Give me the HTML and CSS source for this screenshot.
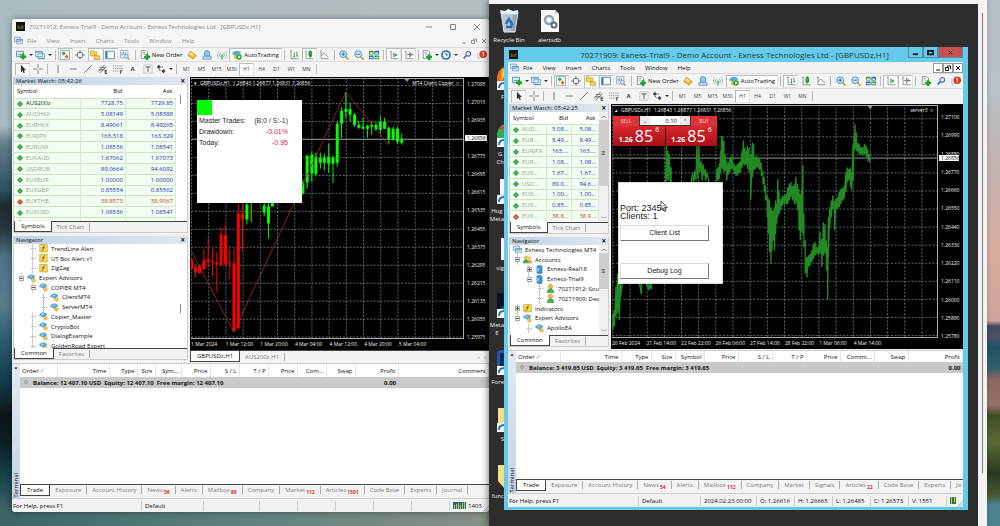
FILE: index.html
```html
<!DOCTYPE html>
<html lang="en">
<head>
  <meta charset="UTF-8">
  <meta name="viewport" content="width=device-width, initial-scale=1.0">
  <title>MetaTrader Terminals</title>
  <link rel="stylesheet" href="styles.css">
</head>
<body>
  <!-- Icon sprite -->
  <svg class="sprite" aria-hidden="true">
    <symbol id="i-logo" viewBox="0 0 12 12"><path fill="#111" d="M0 0h12v12H0z"/><path fill="none" stroke="#b5a642" d="M2 5.500h3M7 5.500h3M2 8h8"/></symbol>
    <symbol id="i-win" viewBox="0 0 12 12"><path fill="#dcecf8" stroke="#6a9cc8" d="M.5 1.500h8v6h-8zM3.500 4.500h8v6h-8z"/><path stroke="#6a9cc8" stroke-width="2" d="M3.500 5h8"/></symbol>
    <symbol id="i-newchart" viewBox="0 0 12 12"><path fill="#d9ecf7" stroke="#4c87ad" d="M.5 1.500h8.500v6.500H.5z"/><path stroke="#4c87ad" d="M2 5.500h5"/><path stroke="#19a32b" stroke-width="3" d="M8.500 4.500v7M5 8h7"/></symbol>
    <symbol id="i-profiles" viewBox="0 0 12 12"><path fill="#e5f0f8" stroke="#6d9cc0" d="M3.500 4.500h8v6h-8zM.5 1.500h8.500v6.500H.5z"/><path stroke="#4b87b5" d="M.5 2.500h8M4 10h7"/></symbol>
    <symbol id="i-market" viewBox="0 0 12 12"><path fill="#fffbe8" stroke="#6b9ed1" d="M.5.5h11v11H.5z"/><path fill="#35a547" d="M4.500 1.500l2.500 2.500-2.500 2.500L2 4z"/><path fill="#e26b20" d="M8 5.500L10.500 8 8 10.500 5.500 8z"/></symbol>
    <symbol id="i-target" viewBox="0 0 12 12"><circle cx="6" cy="6" r="3.500" fill="none" stroke="#666"/><path stroke="#666" d="M6 0v4M6 8v4M0 6h4M8 6h4"/></symbol>
    <symbol id="i-folder" viewBox="0 0 12 12"><path fill="#f6d34a" stroke="#c2952a" stroke-width=".8" d="M.5 1h3l1 1h3.500v5H.5zM5 6h2.500l1 1h3v4.500H5z"/><path fill="#f9e27e" d="M7 3l1 2 2 .3-1.500 1.400z"/></symbol>
    <symbol id="i-term" viewBox="0 0 12 12"><path fill="#fff" stroke="#3b78b5" d="M.5 1.500h11v9H.5z"/><path fill="#3b78b5" d="M1 2h2v8H1z"/></symbol>
    <symbol id="i-tester" viewBox="0 0 12 12"><path fill="#edf4fa" stroke="#8fafc8" d="M.5.5h9v9h-9z"/><path stroke="#5d86ac" d="M2.500 3v4M4.500 2v4M6.500 3v3"/><circle cx="7.500" cy="7.500" r="2.200" fill="#dff0ff" stroke="#6f94b4"/><path stroke="#cf9b3a" stroke-width="1.500" d="M9 9l2.500 2.500"/></symbol>
    <symbol id="i-order" viewBox="0 0 12 12"><path fill="#fff" stroke="#888" d="M1.500.5h5.500l2 2v7.500H1.500z"/><path stroke="#888" stroke-width=".8" d="M3 3h3M3 5h4"/><path stroke="#19a32b" stroke-width="3" d="M8.500 5v7M5 8.500h7"/></symbol>
    <symbol id="i-gold" viewBox="0 0 12 12"><path fill="#f0b92f" stroke="#b47e13" stroke-width=".7" d="M4 1.500l7 5-3.500 4.500L.8 6.500z"/><path fill="#fbe08a" d="M4 2.500l4.500 3.200-2 1.500L2 4.700z"/></symbol>
    <symbol id="i-dome" viewBox="0 0 12 12"><path fill="#8ec6ef" stroke="#3e84bb" stroke-width=".8" d="M3 7V3.500a3 3 0 016 0V7z"/><path fill="#c7e0f3" stroke="#3e84bb" stroke-width=".8" d="M1 8h10v3H1z"/></symbol>
    <symbol id="i-signal" viewBox="0 0 12 12"><path fill="none" stroke="#9fbcc4" d="M2.500 1.500a7 7 0 000 9M9.500 1.500a7 7 0 010 9"/><path fill="none" stroke="#5fb86a" d="M4.300 3.500a3.500 3.500 0 000 5M7.700 3.500a3.500 3.500 0 010 5"/><path stroke="#3fae4c" stroke-width="1.500" d="M6 5.500v6"/></symbol>
    <symbol id="i-auto" viewBox="0 0 12 12"><path fill="#55a9dd" d="M0 5c1-4 8-6 11-1L6 7z"/><path fill="#e6b93c" d="M2 6h6v5H3z"/><circle cx="8.500" cy="8.500" r="3.300" fill="#27a83c"/><path fill="#fff" d="M7.500 6.700l3 1.800-3 1.800z"/></symbol>
    <symbol id="i-bars" viewBox="0 0 12 12"><path fill="none" stroke="#888" d="M2.500 1v9.500h9M2.500 1L1 2.500M2.500 1L4 2.500"/><path fill="none" stroke="#2a8a3a" d="M6.500 3v6M5 8h1.500M9.500 2v6M9.500 7H11"/></symbol>
    <symbol id="i-candle" viewBox="0 0 12 12"><path fill="none" stroke="#888" d="M2.500 1v9.500h9M2.500 1L1 2.500"/><path stroke="#1d8b2e" d="M7.500 0v9.500"/><path fill="#21b53a" stroke="#1d8b2e" d="M6 2h3v5.500H6z"/></symbol>
    <symbol id="i-line" viewBox="0 0 12 12"><path fill="none" stroke="#888" d="M2.500 1v9.500h9M2.500 1L1 2.500"/><path fill="none" stroke="#5f9b68" d="M3 7c2-4 3-4 5-1l3 2"/></symbol>
    <symbol id="i-zoomin" viewBox="0 0 12 12"><path stroke="#d1a33b" stroke-width="2.200" d="M7.500 7.500l4 4"/><circle cx="5" cy="5" r="4" fill="#d6ecfb" stroke="#4a92ca" stroke-width="1.200"/><path stroke="#2f78b8" stroke-width="1.300" d="M5 2.800v4.400M2.800 5h4.400"/></symbol>
    <symbol id="i-zoomout" viewBox="0 0 12 12"><path stroke="#d1a33b" stroke-width="2.200" d="M7.500 7.500l4 4"/><circle cx="5" cy="5" r="4" fill="#d6ecfb" stroke="#4a92ca" stroke-width="1.200"/><path stroke="#2f78b8" stroke-width="1.300" d="M2.800 5h4.400"/></symbol>
    <symbol id="i-tile" viewBox="0 0 12 12"><path fill="#3f9e3f" d="M0 1h5.500v4.500H0zM6.500 6.500H12V11H6.500z"/><path fill="#2d66b8" d="M6.500 1H12v4.500H6.500zM0 6.500h5.500V11H0z"/><path fill="#fff" d="M1 3h3.500v1.500H1zM7.500 3H11v1.500H7.500zM1 8.500h3.500V10H1zM7.500 8.500H11V10H7.500z"/></symbol>
    <symbol id="i-scroll" viewBox="0 0 12 12"><path fill="none" stroke="#888" d="M2.500 1v9.500h9M2.500 1L1 2.500M5.500 3v6"/><path fill="#26a33b" d="M6.500 3.500l4 2.500-4 2.500z"/></symbol>
    <symbol id="i-shift" viewBox="0 0 12 12"><path fill="none" stroke="#888" d="M2.500 1v9.500h9M2.500 1L1 2.500"/><path fill="none" stroke="#555" d="M7 2v7M7.500 5.500h4M9 4L7.500 5.500 9 7M4 5.500h2.500"/></symbol>
    <symbol id="i-clock" viewBox="0 0 12 12"><circle cx="6" cy="6" r="4.800" fill="#eaf4fc" stroke="#2973ba" stroke-width="2"/><path fill="none" stroke="#444" d="M6 3v3h2.500"/></symbol>
    <symbol id="i-search" viewBox="0 0 12 12"><circle cx="7.500" cy="4.500" r="2.800" fill="#eef4fd" stroke="#4a6fc4" stroke-width="1.300"/><path stroke="#4a6fc4" stroke-width="2" d="M5.500 6.500L2 10"/></symbol>
    <symbol id="i-badge" viewBox="0 0 12 12"><path fill="#e3e3e3" stroke="#bbb" stroke-width=".6" d="M.5 4h7v5H4l-2 2V9H.5z"/><circle cx="7.500" cy="5" r="4.500" fill="#d83a22"/><path fill="none" stroke="#fff" stroke-width="1.100" d="M6.300 3.600l1.400-1v5"/></symbol>
    <symbol id="i-cursor" viewBox="0 0 12 12"><path fill="#333" d="M3.500 1v9l2-2 1.300 3 1.400-.6L7 7.500h2.800z"/></symbol>
    <symbol id="i-cross" viewBox="0 0 12 12"><path stroke="#777" d="M6 0v5M6 7v5M0 6h5M7 6h5"/></symbol>
    <symbol id="i-vline" viewBox="0 0 12 12"><path stroke="#666" d="M6 1v10"/></symbol>
    <symbol id="i-hline" viewBox="0 0 12 12"><path stroke="#666" d="M2 6h8.500"/></symbol>
    <symbol id="i-trend" viewBox="0 0 12 12"><path stroke="#666" d="M1.500 10.500l9-9"/></symbol>
    <symbol id="i-channel" viewBox="0 0 12 12"><path fill="none" stroke="#555" d="M0 9l8-8M2 11l8-8M2 4h6M1 7h7"/><path fill="none" stroke="#333" d="M11 7.500H8.500v4H11M8.500 9.500H11"/></symbol>
    <symbol id="i-fibo" viewBox="0 0 12 12"><path stroke="#888" stroke-dasharray="1.500 .7" d="M0 2.500h12M0 5.500h12M0 8.500h8"/><path fill="none" stroke="#555" d="M11.500 7.500H9v4.500M9 9.500h2"/></symbol>
    <symbol id="i-label" viewBox="0 0 12 12"><path fill="none" stroke="#999" stroke-dasharray="1 1" d="M1 1h10v10H1z"/><path fill="none" stroke="#444" d="M3 3.500h6M6 3.500V9.500"/></symbol>
    <symbol id="i-arrows" viewBox="0 0 12 12"><path fill="#444" d="M3.500 1L6 3.500 3.500 6 1 3.500zM9 6l2.500 2.500L9 11 6.500 8.500z"/><path stroke="#444" d="M3.500 6l2 2.500M6.500 3.500l2 0"/></symbol>
    <symbol id="i-up" viewBox="0 0 8 8"><path fill="#2f9e3c" d="M4 0l4 4-4 4-4-4z"/><path fill="#9be0a0" d="M4 3l1.200 1L4 5.200 2.800 4z"/></symbol>
    <symbol id="i-down" viewBox="0 0 8 8"><path fill="#c8422d" d="M4 0l4 4-4 4-4-4z"/><path fill="#f0a898" d="M4 3l1.200 1L4 5.200 2.800 4z"/></symbol>
    <symbol id="i-fx" viewBox="0 0 12 12"><path fill="#f6dc5e" stroke="#c9a52c" d="M1 .5h10v10H1z"/><path fill="none" stroke="#7a5e10" stroke-width="1.200" d="M8 2.500c-2-.5-2 1-2.300 3S5 9 3.500 8.700M4 5h3.500"/></symbol>
    <symbol id="i-expert" viewBox="0 0 12 12"><path fill="#4ea8dc" stroke="#2c7db3" stroke-width=".6" d="M.5 4.500C2 .5 8 0 10.500 3.500L6.500 7z"/><path fill="#8fd0f2" d="M2 4c2-2.500 4-2.500 6-1.500L4.500 5z"/><path fill="#f0cb4d" stroke="#b5891d" stroke-width=".6" d="M6 7l3-2 2.500 3.500-2 2.500L6.500 10z"/></symbol>
    <symbol id="i-users" viewBox="0 0 12 12"><circle cx="4" cy="3" r="2.500" fill="#e6b53c"/><path fill="#3aa347" d="M0 11c0-7 8-7 8 0z"/><circle cx="8.500" cy="4" r="2.300" fill="#f1c75a"/><path fill="#d9a126" d="M5.500 11c0-6 6.500-6 6.500 0z"/></symbol>
    <symbol id="i-user" viewBox="0 0 12 12"><circle cx="6" cy="3.200" r="2.900" fill="#e9b93b" stroke="#a6791a" stroke-width=".6"/><path fill="#43b04e" stroke="#287a32" stroke-width=".6" d="M1.500 11.500c0-7 9-7 9 0z"/></symbol>
    <symbol id="i-server" viewBox="0 0 12 12"><path fill="#3a95d2" stroke="#1f6ca3" stroke-width=".6" d="M2.500 1.500c2-1.500 5-1.500 7 0v9c-2 1.500-5 1.500-7 0z"/><path stroke="#c9e8fb" stroke-width="1.500" d="M4 3.500v5"/></symbol>
    <symbol id="i-conn" viewBox="0 0 13 7"><path fill="#2f6478" d="M0 0h13v7H0z"/><path stroke="#b4cf52" d="M1.500 3v4M3.500 2v5M5.500 1v6M7.500 3v4M9.500 1v6M11.500 0v7"/></symbol>
    <symbol id="i-blocks" viewBox="0 0 6 7"><path fill="#3b7040" d="M0 0h6v7H0z"/><path stroke="#c3d24e" d="M1.500 0v7M4.500 0v5"/></symbol>
    <symbol id="i-grip" viewBox="0 0 8 8"><path stroke="#aaa" d="M0 8l8-8M3 8l5-5M6 8l2-2"/></symbol>
  </svg>

  <main class="desktop">
    <!-- Local terminal -->
    <section class="window local">
      <header class="titlebar">
        <svg class="logo"><use href="#i-logo"/></svg>
        <h1>70271912: Exness-Trial9 - Demo Account - Exness Technologies Ltd - [GBPUSDz,H1]</h1>
        <div class="window-buttons">
          <button aria-label="Minimize"><svg viewBox="0 0 8 8"><path d="M1 4h6"/></svg></button>
          <button aria-label="Maximize"><svg viewBox="0 0 8 8"><path d="M1.500 1.500h5v5h-5z"/></svg></button>
          <button aria-label="Close"><svg viewBox="0 0 8 8"><path d="M1 1l6 6M7 1L1 7"/></svg></button>
        </div>
      </header>
      <nav class="menu">
        <svg class="icon"><use href="#i-win"/></svg>
        <button>File</button><button>View</button><button>Insert</button><button>Charts</button><button>Tools</button><button>Window</button><button>Help</button>
        <div class="child-buttons">
          <button aria-label="Minimize chart"><svg viewBox="0 0 8 8"><path d="M2 6h4"/></svg></button>
          <button aria-label="Restore chart"><svg viewBox="0 0 8 8"><path d="M1.500 3.500h3v3h-3zM3 2h3.500v3"/></svg></button>
          <button aria-label="Close chart"><svg viewBox="0 0 8 8"><path d="M2 2l4 4M6 2L2 6"/></svg></button>
        </div>
      </nav>
      <div class="toolbar">
        <button class="tool drop" aria-label="New chart"><svg class="icon"><use href="#i-newchart"/></svg></button>
        <button class="tool drop" aria-label="Profiles"><svg class="icon"><use href="#i-profiles"/></svg></button>
        <i class="sep"></i>
        <button class="tool on" aria-label="Market watch"><svg class="icon"><use href="#i-market"/></svg></button>
        <button class="tool" aria-label="Data window"><svg class="icon"><use href="#i-target"/></svg></button>
        <button class="tool on" aria-label="Navigator"><svg class="icon"><use href="#i-folder"/></svg></button>
        <button class="tool on" aria-label="Terminal"><svg class="icon"><use href="#i-term"/></svg></button>
        <button class="tool" aria-label="Strategy tester"><svg class="icon"><use href="#i-tester"/></svg></button>
        <i class="sep"></i>
        <button class="tool wide"><svg class="icon"><use href="#i-order"/></svg>New Order</button>
        <button class="tool" aria-label="MetaEditor"><svg class="icon"><use href="#i-gold"/></svg></button>
        <button class="tool" aria-label="Market"><svg class="icon"><use href="#i-dome"/></svg></button>
        <button class="tool" aria-label="Signals"><svg class="icon"><use href="#i-signal"/></svg></button>
        <button class="tool wide on"><svg class="icon"><use href="#i-auto"/></svg>AutoTrading</button>
        <i class="sep"></i>
        <button class="tool" aria-label="Bar chart"><svg class="icon"><use href="#i-bars"/></svg></button>
        <button class="tool on" aria-label="Candlesticks"><svg class="icon"><use href="#i-candle"/></svg></button>
        <button class="tool" aria-label="Line chart"><svg class="icon"><use href="#i-line"/></svg></button>
        <i class="sep"></i>
        <button class="tool" aria-label="Zoom in"><svg class="icon"><use href="#i-zoomin"/></svg></button>
        <button class="tool" aria-label="Zoom out"><svg class="icon"><use href="#i-zoomout"/></svg></button>
        <button class="tool" aria-label="Tile windows"><svg class="icon"><use href="#i-tile"/></svg></button>
        <i class="sep"></i>
        <button class="tool on" aria-label="Auto scroll"><svg class="icon"><use href="#i-scroll"/></svg></button>
        <button class="tool on" aria-label="Chart shift"><svg class="icon"><use href="#i-shift"/></svg></button>
        <i class="sep"></i>
        <button class="tool drop" aria-label="Indicators"><svg class="icon"><use href="#i-order"/></svg></button>
        <button class="tool drop" aria-label="Periods"><svg class="icon"><use href="#i-clock"/></svg></button>
        <button class="tool" aria-label="Search"><svg class="icon"><use href="#i-search"/></svg></button>
        <button class="tool" aria-label="Messages"><svg class="icon"><use href="#i-badge"/></svg></button>
      </div>
      <div class="toolbar periods">
        <button class="tool on" aria-label="Cursor"><svg class="icon"><use href="#i-cursor"/></svg></button>
        <button class="tool" aria-label="Crosshair"><svg class="icon"><use href="#i-cross"/></svg></button>
        <i class="sep"></i>
        <button class="tool" aria-label="Vertical line"><svg class="icon"><use href="#i-vline"/></svg></button>
        <button class="tool" aria-label="Horizontal line"><svg class="icon"><use href="#i-hline"/></svg></button>
        <button class="tool" aria-label="Trendline"><svg class="icon"><use href="#i-trend"/></svg></button>
        <button class="tool" aria-label="Channel"><svg class="icon"><use href="#i-channel"/></svg></button>
        <button class="tool" aria-label="Fibonacci"><svg class="icon"><use href="#i-fibo"/></svg></button>
        <button class="tool letter">A</button>
        <button class="tool" aria-label="Text label"><svg class="icon"><use href="#i-label"/></svg></button>
        <button class="tool drop" aria-label="Arrows"><svg class="icon"><use href="#i-arrows"/></svg></button>
        <i class="sep"></i>
        <button class="tool">M1</button><button class="tool">M5</button><button class="tool">M15</button><button class="tool">M30</button><button class="tool on">H1</button><button class="tool">H4</button><button class="tool">D1</button><button class="tool">W1</button><button class="tool">MN</button>
        <i class="sep"></i>
      </div>

      <div class="workspace">
        <aside class="side">
          <section class="panel market">
            <h2>Market Watch: 05:42:26<button aria-label="Close market watch">×</button></h2>
            <div class="panel-body">
              <table class="quotes">
                <thead><tr><th>Symbol</th><th>Bid</th><th>Ask</th></tr></thead>
                <tbody>
                  <tr class="active"><td><svg><use href="#i-up"/></svg>AUS200z</td><td>7728.75</td><td>7729.85</td></tr>
                  <tr><td><svg><use href="#i-up"/></svg>AUDHKX</td><td>5.08149</td><td>5.08388</td></tr>
                  <tr><td><svg><use href="#i-up"/></svg>EURHKX</td><td>8.49061</td><td>8.49265</td></tr>
                  <tr><td><svg><use href="#i-up"/></svg>EURJPX</td><td>163.318</td><td>163.329</td></tr>
                  <tr><td><svg><use href="#i-up"/></svg>EURUSX</td><td>1.08536</td><td>1.08541</td></tr>
                  <tr><td><svg><use href="#i-up"/></svg>EUXAUD</td><td>1.67062</td><td>1.67073</td></tr>
                  <tr><td><svg><use href="#i-up"/></svg>USDRUB</td><td>89.0664</td><td>94.6092</td></tr>
                  <tr><td><svg><use href="#i-up"/></svg>EUXEUR</td><td>1.00000</td><td>1.00000</td></tr>
                  <tr><td><svg><use href="#i-up"/></svg>EUXGBP</td><td>0.85554</td><td>0.85562</td></tr>
                  <tr class="falling"><td><svg><use href="#i-down"/></svg>EUXTHB</td><td>38.8573</td><td>38.9067</td></tr>
                  <tr><td><svg><use href="#i-up"/></svg>EUXUSD</td><td>1.08536</td><td>1.08541</td></tr>
                  <tr class="falling"><td><svg><use href="#i-down"/></svg>EUXZAR</td><td>20.67823</td><td>20.70180</td></tr>
                </tbody>
              </table>
              <div class="thin-scroll"></div>
            </div>
            <div class="tabs"><button class="selected">Symbols</button><button>Tick Chart</button></div>
          </section>
          <section class="panel navigator">
            <h2>Navigator<button aria-label="Close navigator">×</button></h2>
            <div class="panel-body">
              <ul class="tree">
                <li class="l2"><i></i><svg><use href="#i-fx"/></svg>TrendLine Alert</li>
                <li class="l2"><i></i><svg><use href="#i-fx"/></svg>UT Bot Alert v1</li>
                <li class="l2"><i></i><svg><use href="#i-fx"/></svg>ZigZag</li>
                <li class="l1"><i class="box"></i><svg><use href="#i-expert"/></svg>Expert Advisors</li>
                <li class="l2"><i class="box"></i><svg><use href="#i-expert"/></svg>COPIER MT4</li>
                <li class="l3"><i></i><svg><use href="#i-expert"/></svg>ClientMT4</li>
                <li class="l3"><i></i><svg><use href="#i-expert"/></svg>ServerMT4</li>
                <li class="l2"><i></i><svg><use href="#i-expert"/></svg>Copier_Master</li>
                <li class="l2"><i></i><svg><use href="#i-expert"/></svg>CryptoBot</li>
                <li class="l2"><i></i><svg><use href="#i-expert"/></svg>DialogExample</li>
                <li class="l2"><i></i><svg><use href="#i-expert"/></svg>GoldenRoad Expert</li>
              </ul>
              <div class="thin-scroll low"></div>
            </div>
            <div class="tabs"><button class="selected">Common</button><button>Favorites</button></div>
          </section>
        </aside>

        <section class="chart-area">
          <div class="chart">
            <div class="plot">
              <svg viewBox="191 78 274 260" preserveAspectRatio="none">
                <defs>
                  <pattern id="grid-a" x="191" y="84" width="17.330" height="18.040" patternUnits="userSpaceOnUse">
                    <path d="M0 .5H17.330M.5 0V18.040" fill="none" stroke="#66707a" stroke-dasharray="2 1.600"/>
                  </pattern>
                </defs>
                <path fill="url(#grid-a)" d="M191 78h274v260H191z"/>
                <path stroke="#8f979d" d="M191 138.500h274"/>
                <g stroke="#f00" fill="none">
                  <path d="M195.500 264v13M199.500 265v8M204 249v21M208.300 238v28M212.700 248v28M217 252v40M221.300 227v38M225.700 225v40M230 249v30M234.300 248v84M238.700 203v127M243 203v47"/>
                  <path stroke-width="3" d="M191.500 259v10M195.500 267v5M199.500 265v8M204 260v9M208.300 259v3M212.700 261v1M217 262v2M221.300 234v31M225.700 235v29M230 262v1M234.300 263v68M238.700 213v115M243 213v6"/>
                </g>
                <g stroke="#0f0" fill="none">
                  <path d="M247.300 200v24M251.700 200v22M264.700 200v16M269 200v38M303.700 179v15M308 154v34M312.700 151v30M316.700 152v24M321.300 152v16M325.300 153v17M329.700 143v29M334 155v27M338.300 121v45M342.700 106v31M347 91v26M351.300 102v19M355.700 112v14M360 120v8M364.300 117v11M368.700 124v13M373 121v13M377.300 121v9M381.700 115v17M386 117v11M390.300 126v17M394.700 126v14M399 126v17M403.300 133v11"/>
                  <path stroke-width="3" d="M247.300 204v15M264.700 205v7M269 206v17M273 200v6M303.700 182v11M308 155v27M312.700 154v19M316.700 156v17M321.300 157v5M325.300 157v5M329.700 156v7M334 157v6M338.300 123v39M342.700 110v13M347 108v3M351.300 108v6M355.700 114v10M360 124v3M364.300 126v2M368.700 125v3M373 124v2M377.300 124v5M381.700 121v8M386 121v7M390.300 127v11M394.700 128v10M399 128v13M403.300 138v4"/>
                </g>
                <path fill="none" stroke="#b32430" stroke-width=".8" d="M191 250l43 82 113-241 43 53"/>
                <path fill="#999" d="M406 78h5l-2.500 3z"/>
              </svg>
              <div class="chart-head"><span class="tri">▾</span><span>GBPUSDz,H1&nbsp; 1.26843 1.26877 1.26831 1.26856</span><span class="ea">MT4 Client Copier ☺</span></div>
              <div class="popup status-popup">
                <div class="lamp"></div>
                <dl>
                  <dt>Master Trades:</dt><dd class="dark">(B:0 / S:-1)</dd>
                  <dt>Drawdown:</dt><dd>-0.01%</dd>
                  <dt>Today:</dt><dd>-0.95</dd>
                </dl>
              </div>
            </div>
            <div class="prices">
              <span>1.27095</span><span>1.27015</span><span>1.26935</span><span class="current">1.26856</span><span>1.26775</span><span>1.26695</span><span>1.26615</span><span>1.26535</span><span>1.26455</span><span>1.26375</span><span>1.26295</span><span>1.26215</span><span>1.26135</span><span>1.26055</span><span>1.25975</span>
            </div>
            <div class="times"><span>1 Mar 2024</span><span>1 Mar 12:00</span><span>1 Mar 20:00</span><span>4 Mar 04:00</span><span>4 Mar 12:00</span><span>4 Mar 20:00</span><span>5 Mar 04:00</span></div>
          </div>
          <div class="tabs chart-tabs"><button class="selected">GBPUSDz,H1</button><button>AUS200z,H1</button><span class="pager">‹ &nbsp; ›</span></div>
        </section>
      </div>

      <section class="terminal">
        <div class="spine"><button aria-label="Close terminal">×</button><h2>Terminal</h2></div>
        <div class="terminal-main">
          <table class="trades">
            <thead><tr><th>Order &nbsp;⁄</th><th>Time</th><th>Type</th><th>Size</th><th>Sym...</th><th>Price</th><th>S / L</th><th>T / P</th><th>Price</th><th>Com...</th><th>Swap</th><th>Profit</th><th>Comment</th></tr></thead>
            <tbody><tr><td colspan="11"><i class="dot"></i>Balance: 12 407.10 USD&nbsp; Equity: 12 407.10&nbsp; Free margin: 12 407.10</td><td>0.00</td><td></td></tr></tbody>
          </table>
          <div class="tabs">
            <button class="selected">Trade</button><button>Exposure</button><button>Account History</button><button>News<sub>59</sub></button><button>Alerts</button><button>Mailbox<sub>89</sub></button><button>Company</button><button>Market<sub>112</sub></button><button>Articles<sub>1501</sub></button><button>Code Base</button><button>Experts</button><button>Journal</button>
          </div>
        </div>
      </section>
      <footer class="statusbar">
        <span class="help">For Help, press F1</span><span class="profile">Default</span><span class="wide-cell"></span><span></span><span></span><span></span><span></span><span></span>
        <span class="traffic"><svg><use href="#i-conn"/></svg>1403</span><svg class="grip"><use href="#i-grip"/></svg>
      </footer>
    </section>

    <!-- Remote desktop session -->
    <section class="session">
      <div class="remote">
        <div class="shortcuts">
          <a class="shortcut" href="#">
            <svg viewBox="0 0 25 25"><path fill="#b9c6d0" stroke="#e5edf2" d="M4 4h17l-3 20H7z"/><path fill="#e9f1f6" d="M3 2l5 1 3-2 5 2 5-1v4H4z"/><path fill="#93a5b3" d="M16 7h4l-2 16h-4z"/><path fill="none" stroke="#2872c4" stroke-width="2.500" d="M9 16l3-5 3 5-1 3H9"/></svg>
            <span>Recycle Bin</span>
          </a>
          <a class="shortcut covered" href="#"><svg viewBox="0 0 25 25"><circle cx="12" cy="13" r="12" fill="#f26a1b"/><path fill="#fcc62e" d="M5 3l6 5-7 7z"/><path fill="#fff" d="M0 16h9v9H0z"/><path fill="none" stroke="#1f6fc0" stroke-width="2" d="M2 23c0-4 2-5 5-5"/></svg><span>F</span></a>
          <a class="shortcut covered" href="#"><svg viewBox="0 0 25 25"><circle cx="12" cy="13" r="12" fill="#35a853"/><path fill="#e5402f" d="M2 7a12 12 0 0120 0L12 9z"/><path fill="#fff" d="M0 16h9v9H0z"/><path fill="none" stroke="#1f6fc0" stroke-width="2" d="M2 23c0-4 2-5 5-5"/></svg><span>G<br>Ch</span></a>
          <a class="shortcut covered" href="#"><svg viewBox="0 0 25 25"><path fill="#f6f6f6" d="M3 0h20v25H3z"/><path fill="#fff" stroke="#9ab" stroke-width=".5" d="M0 16h9v9H0z"/><path fill="none" stroke="#1f6fc0" stroke-width="2" d="M2 23c0-4 2-5 5-5"/></svg><span>Hug<br>Meta</span></a>
          <a class="shortcut covered" href="#"><svg viewBox="0 0 25 25"><path fill="#f6f6f6" d="M4 2h19v22H4z"/></svg><span>sig</span></a>
          <a class="shortcut covered" href="#"><svg viewBox="0 0 25 25"><path fill="#0b1220" d="M0 0h25v25H0z"/><path fill="#23466b" d="M0 18l9-8v15H0z"/><path fill="#fff" d="M0 16h9v9H0z"/><path fill="none" stroke="#1f6fc0" stroke-width="2" d="M2 23c0-4 2-5 5-5"/></svg><span>Meta<br>E</span></a>
          <a class="shortcut covered" href="#"><svg viewBox="0 0 25 25"><rect width="25" height="25" rx="4" fill="#2457b2"/><rect x="3" y="3" width="20" height="20" fill="#15284a"/><path fill="#fff" d="M0 16h9v9H0z"/><path fill="none" stroke="#1f6fc0" stroke-width="2" d="M2 23c0-4 2-5 5-5"/></svg><span>Fore</span></a>
          <a class="shortcut covered" href="#"><svg viewBox="0 0 25 25"><path fill="#f3dd85" d="M1 1h22v23H1z"/><path fill="#fff" d="M0 16h9v9H0z"/><path fill="none" stroke="#1f6fc0" stroke-width="2" d="M2 23c0-4 2-5 5-5"/></svg><span>S</span></a>
          <a class="shortcut covered" href="#"><svg viewBox="0 0 25 25"><path fill="#f3dd85" d="M1 1h22v23H7l-6-7z"/></svg><span>func</span></a>
          <a class="shortcut second" href="#">
            <svg viewBox="0 0 25 25"><path fill="#f7f8f8" d="M4 2h14l4 4v18H4z"/><path fill="#cfd4d8" d="M18 2l4 4h-4z"/><circle cx="12" cy="12" r="4" fill="none" stroke="#8fa4b2" stroke-width="2.500"/><circle cx="17" cy="17" r="2.500" fill="none" stroke="#5d7482" stroke-width="2"/></svg>
            <span>alertsdb</span>
          </a>
        </div>

        <section class="window guest">
          <header class="titlebar">
            <svg class="logo"><use href="#i-logo"/></svg>
            <h1>70271909: Exness-Trial9 - Demo Account - Exness Technologies Ltd - [GBPUSDz,H1]</h1>
            <div class="window-buttons">
              <button aria-label="Minimize"><svg viewBox="0 0 8 8"><path d="M1 6h6"/></svg></button>
              <button aria-label="Maximize"><svg viewBox="0 0 8 8"><path d="M1 2h6v4H1z"/></svg></button>
              <button class="close" aria-label="Close"><svg viewBox="0 0 8 8"><path d="M2 2l4 4M6 2L2 6"/></svg></button>
            </div>
          </header>
          <nav class="menu">
            <svg class="icon"><use href="#i-win"/></svg>
            <button>File</button><button>View</button><button>Insert</button><button>Charts</button><button>Tools</button><button>Window</button><button>Help</button>
            <div class="child-buttons">
              <button aria-label="Minimize chart"><svg viewBox="0 0 8 8"><path d="M2 6h4"/></svg></button>
              <button aria-label="Restore chart"><svg viewBox="0 0 8 8"><path d="M1.500 3.500h3v3h-3zM3 2h3.500v3"/></svg></button>
              <button aria-label="Close chart"><svg viewBox="0 0 8 8"><path d="M2 2l4 4M6 2L2 6"/></svg></button>
            </div>
          </nav>
          <div class="toolbar">
            <button class="tool drop" aria-label="New chart"><svg class="icon"><use href="#i-newchart"/></svg></button>
            <button class="tool drop" aria-label="Profiles"><svg class="icon"><use href="#i-profiles"/></svg></button>
            <i class="sep"></i>
            <button class="tool on" aria-label="Market watch"><svg class="icon"><use href="#i-market"/></svg></button>
            <button class="tool" aria-label="Data window"><svg class="icon"><use href="#i-target"/></svg></button>
            <button class="tool on" aria-label="Navigator"><svg class="icon"><use href="#i-folder"/></svg></button>
            <button class="tool on" aria-label="Terminal"><svg class="icon"><use href="#i-term"/></svg></button>
            <button class="tool" aria-label="Strategy tester"><svg class="icon"><use href="#i-tester"/></svg></button>
            <i class="sep"></i>
            <button class="tool wide"><svg class="icon"><use href="#i-order"/></svg>New Order</button>
            <button class="tool" aria-label="MetaEditor"><svg class="icon"><use href="#i-gold"/></svg></button>
            <button class="tool" aria-label="Market"><svg class="icon"><use href="#i-dome"/></svg></button>
            <button class="tool" aria-label="Signals"><svg class="icon"><use href="#i-signal"/></svg></button>
            <button class="tool wide on"><svg class="icon"><use href="#i-auto"/></svg>AutoTrading</button>
            <i class="sep"></i>
            <button class="tool on" aria-label="Bar chart"><svg class="icon"><use href="#i-bars"/></svg></button>
            <button class="tool" aria-label="Candlesticks"><svg class="icon"><use href="#i-candle"/></svg></button>
            <button class="tool" aria-label="Line chart"><svg class="icon"><use href="#i-line"/></svg></button>
            <i class="sep"></i>
            <button class="tool" aria-label="Zoom in"><svg class="icon"><use href="#i-zoomin"/></svg></button>
            <button class="tool" aria-label="Zoom out"><svg class="icon"><use href="#i-zoomout"/></svg></button>
            <button class="tool" aria-label="Tile windows"><svg class="icon"><use href="#i-tile"/></svg></button>
            <i class="sep"></i>
            <button class="tool on" aria-label="Auto scroll"><svg class="icon"><use href="#i-scroll"/></svg></button>
            <button class="tool on" aria-label="Chart shift"><svg class="icon"><use href="#i-shift"/></svg></button>
            <i class="sep"></i>
            <button class="tool" aria-label="Indicators"><svg class="icon"><use href="#i-order"/></svg></button>
            <button class="tool" aria-label="Search"><svg class="icon"><use href="#i-search"/></svg></button>
            <button class="tool" aria-label="Messages"><svg class="icon"><use href="#i-badge"/></svg></button>
          </div>
          <div class="toolbar periods">
            <button class="tool on" aria-label="Cursor"><svg class="icon"><use href="#i-cursor"/></svg></button>
            <button class="tool" aria-label="Crosshair"><svg class="icon"><use href="#i-cross"/></svg></button>
            <i class="sep"></i>
            <button class="tool" aria-label="Vertical line"><svg class="icon"><use href="#i-vline"/></svg></button>
            <button class="tool" aria-label="Horizontal line"><svg class="icon"><use href="#i-hline"/></svg></button>
            <button class="tool" aria-label="Trendline"><svg class="icon"><use href="#i-trend"/></svg></button>
            <button class="tool" aria-label="Channel"><svg class="icon"><use href="#i-channel"/></svg></button>
            <button class="tool" aria-label="Fibonacci"><svg class="icon"><use href="#i-fibo"/></svg></button>
            <button class="tool letter">A</button>
            <button class="tool" aria-label="Text label"><svg class="icon"><use href="#i-label"/></svg></button>
            <button class="tool drop" aria-label="Arrows"><svg class="icon"><use href="#i-arrows"/></svg></button>
            <i class="sep"></i>
            <button class="tool">M1</button><button class="tool">M5</button><button class="tool">M15</button><button class="tool">M30</button><button class="tool on">H1</button><button class="tool">H4</button><button class="tool">D1</button><button class="tool">W1</button><button class="tool">MN</button>
            <i class="sep"></i>
          </div>

          <div class="workspace">
            <aside class="side">
              <section class="panel market">
                <h2>Market Watch: 05:42:25<button aria-label="Close market watch">×</button></h2>
                <div class="panel-body">
                  <table class="quotes">
                    <thead><tr><th>Symbol</th><th>Bid</th><th>Ask</th></tr></thead>
                    <tbody>
                      <tr><td><svg><use href="#i-up"/></svg>AUD...</td><td>5.08...</td><td>5.08...</td></tr>
                      <tr><td><svg><use href="#i-up"/></svg>EUR...</td><td>8.49...</td><td>8.49...</td></tr>
                      <tr><td><svg><use href="#i-up"/></svg>EURJPX</td><td>163....</td><td>163....</td></tr>
                      <tr><td><svg><use href="#i-up"/></svg>EUR...</td><td>1.08...</td><td>1.08...</td></tr>
                      <tr><td><svg><use href="#i-up"/></svg>EUX...</td><td>1.67...</td><td>1.67...</td></tr>
                      <tr><td><svg><use href="#i-up"/></svg>USD...</td><td>89.0...</td><td>94.6...</td></tr>
                      <tr><td><svg><use href="#i-up"/></svg>EUX...</td><td>1.00...</td><td>1.00...</td></tr>
                      <tr><td><svg><use href="#i-up"/></svg>EUX...</td><td>0.85...</td><td>0.85...</td></tr>
                      <tr class="falling"><td><svg><use href="#i-down"/></svg>EUX...</td><td>38.8...</td><td>38.9...</td></tr>
                    </tbody>
                  </table>
                  <div class="scrollbar"><span>︿</span><div class="thumb tall">≡</div><span>﹀</span></div>
                </div>
                <div class="tabs"><button class="selected">Symbols</button><button>Tick Chart</button></div>
              </section>
              <section class="panel navigator">
                <h2>Navigator<button aria-label="Close navigator">×</button></h2>
                <div class="panel-body">
                  <ul class="tree">
                    <li><svg><use href="#i-win"/></svg>Exness Technologies MT4</li>
                    <li class="l1"><i class="box"></i><svg><use href="#i-users"/></svg>Accounts</li>
                    <li class="l2"><i class="box plus"></i><svg><use href="#i-server"/></svg>Exness-Real18</li>
                    <li class="l2"><i class="box"></i><svg><use href="#i-server"/></svg>Exness-Trial9</li>
                    <li class="l3"><i></i><svg><use href="#i-user"/></svg>70271912: Sou</li>
                    <li class="l3"><i></i><svg><use href="#i-user"/></svg>70271909: Des</li>
                    <li class="l1"><i class="box plus"></i><svg><use href="#i-fx"/></svg>Indicators</li>
                    <li class="l1"><i class="box"></i><svg><use href="#i-expert"/></svg>Expert Advisors</li>
                    <li class="l2"><i></i><svg><use href="#i-expert"/></svg>ApolloEA</li>
                  </ul>
                  <div class="scrollbar"><span>︿</span><div class="thumb">≡</div><span>﹀</span></div>
                </div>
                <div class="tabs"><button class="selected">Common</button><button>Favorites</button></div>
              </section>
            </aside>

            <section class="chart-area">
              <div class="chart">
                <div class="plot">
                  <!-- three drawing units to a pixel -->
                  <svg viewBox="18 15 984 696" preserveAspectRatio="none">
                    <defs>
                      <pattern id="grid-b" x="19" y="52" width="52" height="54.400" patternUnits="userSpaceOnUse">
                        <path d="M0 1.500H52M1.500 0V54.400" fill="none" stroke="#66707a" stroke-width="3" stroke-dasharray="6 5"/>
                      </pattern>
                    </defs>
                    <path fill="url(#grid-b)" d="M18 15h984v696H18z"/>
                    <path stroke="#8a949c" stroke-width="3" d="M18 172h984"/>
                    <path fill="none" stroke="#238a23" stroke-width="4" stroke-linejoin="bevel" d="M20 640V690L25 630V680L30 560V650L35 520V640L40 515V660L44 540V590L50 545 100 545 107 582V550L120 545 130 570V550L137 568V545M180 245L183 135 184 240 187 150 189 240 191 160 195 245 197 200V245M258 245L262 215 265 245 269 210 272 240 275 135 278 235 281 135 284 215 288 180 291 240 294 190 297 225 301 205V240L306 215 311 245M335 240V210L339 200V240L343 190V235L347 150V220L350 105V200L353 108V205L357 120V215L361 160V210L365 180V240L370 185V222L375 170V215L379 168V205L383 165V205L388 190V220L393 195V225L398 190V225L402 185V218L407 180V215L412 150V200L416 118V190L420 140V195L424 150V190L428 135V205L433 140V215L438 160V298L443 125V230L447 130V210L451 168V205L455 165V200L460 170V203L465 172V208L470 185V225L475 210V250L479 230V275L483 255V300L488 285V350L491 292V400L495 300V455L499 320V490L502 330V450L506 330V420L510 320V450L513 300V400L517 310V370L520 235V350L524 270V340L529 295V328L534 285V315L540 282V312L546 280V312L550 260V310L555 248V300L560 245V290L565 255V300L570 250V310L575 228V310L580 250V330L584 265V390L588 280V420L592 270V390L596 192V400L599 340V440L603 420V520L608 470V532L613 465V500L618 460V495L623 450V485L628 430V475L633 425V465L638 440V462L644 435V465L648 395V460L653 415V500L658 365V465L663 370V460L667 420V510L671 440V598L673 350V470L677 320V385L682 300V350L687 285V325L692 300V390L696 295V325L701 290V325L706 272V320L711 265V310L716 262V300L721 255V295L726 215V275L730 200V245L735 205V240L740 200V260L744 215V268L748 130V240L751 110V150L754 70V145L758 95V150L762 125V155L767 130V162L772 138V160L777 140V165L783 130V160L788 135V170L793 145V182L798 160V185"/>
                    <path fill="#999" d="M792 15h15l-7 9z"/>
                  </svg>
                  <div class="chart-head"><span class="tri">▴</span><span>GBPUSDz,H1&nbsp; 1.26843 1.26877 1.26831 1.26856</span><span class="ea">server3 ☺</span></div>
                  <form class="one-click">
                    <button type="button" class="side-name">SELL</button>
                    <div class="volume"><button type="button" aria-label="Less">⌄</button><input aria-label="Volume" value="0.10"><button type="button" aria-label="More">⌃</button></div>
                    <button type="button" class="side-name">BUY</button>
                    <div class="quote"><small>1.26</small><b>85</b><sup>6</sup></div>
                    <div class="quote"><small>1.26</small><b>85</b><sup>6</sup></div>
                  </form>
                  <div class="popup server-popup">
                    <p>Port: 23456<br>Clients: 1</p>
                    <button>Client List</button>
                    <button>Debug Log</button>
                    <svg class="pointer" viewBox="0 0 8 12"><path fill="#fff" fill-opacity=".6" stroke="#333" stroke-width=".8" d="M1 1v9l2-2 1.500 3.500 1.500-.7L4.500 7.500H7.300z"/></svg>
                  </div>
                </div>
                <div class="prices">
                  <span>1.27100</span><span>1.26990</span><span>1.26880</span><span>1.26770</span><span>1.26660</span><span>1.26550</span><span>1.26440</span><span>1.26330</span><span>1.26220</span><span>1.26110</span><span>1.26000</span><span>1.25890</span><span>1.25780</span>
                  <span class="current float">1.26856</span>
                </div>
                <div class="times"><span>20 Feb 2024</span><span>21 Feb 14:00</span><span>22 Feb 22:00</span><span>26 Feb 06:00</span><span>27 Feb 14:00</span><span>28 Feb 22:00</span><span>1 Mar 06:00</span><span>4 Mar 14:00</span></div>
              </div>
            </section>
          </div>

          <section class="terminal">
            <div class="spine"><button aria-label="Close terminal">×</button><h2>Terminal</h2></div>
            <div class="terminal-main">
              <table class="trades">
                <thead><tr><th>Order &nbsp;⁄</th><th>Time</th><th>Type</th><th>Size</th><th>Symbol</th><th>Price</th><th>S / L</th><th>T / P</th><th>Price</th><th>Commi...</th><th>Swap</th><th>Profit</th></tr></thead>
                <tbody><tr><td colspan="11"><i class="dot"></i>Balance: 3 419.65 USD&nbsp; Equity: 3 419.65&nbsp; Free margin: 3 419.65</td><td>0.00</td></tr></tbody>
              </table>
              <div class="tabs">
                <button class="selected">Trade</button><button>Exposure</button><button>Account History</button><button>News<sub>54</sub></button><button>Alerts</button><button>Mailbox<sub>112</sub></button><button>Company</button><button>Market</button><button>Signals</button><button>Articles<sub>22</sub></button><button>Code Base</button><button>Experts</button><button>Jo</button>
              </div>
            </div>
          </section>
          <footer class="statusbar">
            <span class="help">For Help, press F1</span><span class="profile">Default</span><span class="stamp">2024.02.23 00:00</span><span>O: 1.26616</span><span>H: 1.26665</span><span>L: 1.26485</span><span>C: 1.26573</span><span>V: 1551</span>
            <span class="traffic"><svg><use href="#i-blocks"/></svg></span><svg class="grip"><use href="#i-grip"/></svg>
          </footer>
        </section>
      </div>
      <div class="session-scroll"></div>
    </section>
  </main>
</body>
</html>
```
FILE: styles.css
```css
* {
  margin: 0;
  padding: 0;
  box-sizing: border-box;
}

body {
  font: 6px/8px "Open Sans", "Noto Sans", sans-serif;
  color: #111;
}

button {
  font: inherit;
  color: inherit;
  background: none;
  border: none;
  white-space: nowrap;
}

h1,
h2 {
  font: inherit;
  white-space: nowrap;
}

svg {
  display: block;
  flex: none;
}

.sprite {
  position: absolute;
  width: 0;
  height: 0;
}

/* Desktop */
.desktop {
  position: relative;
  height: 100vh;
  overflow: hidden;
  background:
    linear-gradient(#b4c0c7, #b9bfc6 18%, #c3b3b0 32%, #d8aa9c 48%, #cfa39b 61%, #45495c 62%, #4c5268 64%, #1f5364 66%, #33616d 70%, #8d665f 72%, #96706a 77%, #3f4d25 79%, #5c6a35 84%, #263a20 90%, #48572e 94%, #4f8390 96%) right / 60px 100% no-repeat,
    linear-gradient(#aabcc2, #a8bac1 24%, #66818d 27%, #4b6a78 31%, #2b5363 36%, #1e2c30 39%, #24333a 43%, #4b7485 49%, #557d8c 58%, #2b5b6b 65%, #123e4c 72%, #0d1517 79%, #0d1f22 84%, #14414a 90%, #3b6466 97%) left / 20px 100% no-repeat,
    linear-gradient(90deg, #aabcc2, #b4bdc0 40%, #bfbfc5) top / 100% 40px no-repeat,
    linear-gradient(90deg, #3b6466, #5f8280 25%, #8a8f86 50%) bottom / 100% 40px no-repeat,
    #445;
}

.window {
  position: absolute;
  display: flex;
  flex-direction: column;
  background: #f2f2f2;
}

.local {
  inset: 19px 51.1% 14px 12px;
  border-radius: 3px;
  overflow: hidden;
  box-shadow: 0 0 6px rgba(0, 0, 0, 0.4);
}

.session {
  position: absolute;
  inset: 0 13px 0 48.9%;
  display: flex;
  padding-top: 4px;
  background: #f3f3f3;
  box-shadow: -2px 0 6px rgba(0, 0, 0, 0.4);
}

.remote {
  position: relative;
  flex: 1;
  background: #2d2d2d;
}

.session-scroll {
  width: 9px;
  padding: 9px 4px 53px;
}

.session-scroll::before {
  content: "";
  display: block;
  width: 1px;
  height: 100%;
  background: #777;
}

.guest {
  inset: 43px 10px 16px 15px;
  border: solid #66cbea;
  border-width: 0 5px 3px 4px;
}

/* Desktop shortcuts */
.shortcuts {
  display: grid;
  grid-auto-flow: column;
  grid-template-rows: repeat(9, 57px);
  grid-template-columns: 40px 41px;
  height: 100%;
  overflow: hidden;
}

.shortcut {
  display: flex;
  flex-direction: column;
  align-items: center;
  gap: 3px;
  padding-top: 4px;
  color: #eee;
  text-align: center;
  text-decoration: none;
}

.shortcut svg {
  width: 25px;
  height: 25px;
}

.covered {
  width: 15px;
  align-items: flex-end;
  overflow: hidden;
}

.covered svg {
  margin-right: -18px;
}

/* Title bar and menu */
.titlebar {
  display: flex;
  align-items: center;
  height: 15px;
  padding-left: 4px;
  gap: 4px;
}

.logo {
  width: 9px;
  height: 9px;
}

.window-buttons {
  display: flex;
  margin-left: auto;
}

.window-buttons svg,
.child-buttons svg {
  width: 8px;
  height: 8px;
  margin: auto;
  fill: none;
  stroke: currentColor;
  stroke-width: 1;
}

.local .titlebar {
  color: #858585;
  background: #f5f5f5;
}

.local .window-buttons button {
  width: 24px;
}

/* the left padding balances the window buttons, so the title sits mid-window */
.guest .titlebar {
  padding-left: 1px;
  background: #66cbea;
  color: #1c3a46;
  font-size: 8px;
}

.guest .titlebar h1 {
  flex: 1;
  padding-left: 43px;
  text-align: center;
}

.guest .window-buttons {
  align-self: flex-start;
  margin-left: 0;
}

.guest .window-buttons button {
  width: 15px;
  height: 11px;
  border: 1px solid #4690a8;
  border-top: none;
  color: #111;
}

.guest .window-buttons svg {
  width: 7px;
  height: 7px;
  stroke-width: 2;
}

.guest .window-buttons .close {
  width: 25px;
  background: #c75050;
}

.guest .close svg {
  stroke-width: 1;
}

.menu {
  display: flex;
  align-items: center;
  height: 13px;
  padding-left: 2px;
  gap: 10px;
}

.menu .icon {
  width: 9px;
  height: 9px;
  margin-right: -6px;
}

.local .menu {
  color: #8f8f8f;
  background: #f5f5f5;
}

.guest .menu {
  height: 11px;
}

.child-buttons {
  display: flex;
  margin-left: auto;
}

.child-buttons button {
  width: 10px;
  height: 10px;
}

.guest .child-buttons button {
  border: 1px solid #999;
  background: #fff;
}

/* Toolbars */
.toolbar {
  display: flex;
  align-items: center;
  height: 14px;
  padding-left: 3px;
  border-top: 1px solid #dcdcdc;
  background: #f4f4f4;
}

.guest .toolbar {
  height: 15px;
}

.tool {
  display: flex;
  align-items: center;
  justify-content: center;
  width: 15px;
  height: 13px;
}

.periods .tool {
  color: #444;
  font-size: 5px;
}

.periods .letter {
  font-size: 6px;
  font-weight: bold;
}

.tool .icon {
  width: 10px;
  height: 10px;
}

.tool.on {
  background: #fbfbfb;
  border: 1px solid #ccc;
  border-color: #bbb #e4e4e4 #e4e4e4 #bbb;
}

.tool.wide {
  width: auto;
  padding: 0 2px;
  gap: 2px;
}

.tool.drop {
  width: 19px;
}

.tool.drop::after {
  content: "";
  margin-left: 3px;
  border: solid transparent;
  border-width: 2px 2px 0;
  border-top-color: #333;
}

.sep {
  width: 1px;
  height: 10px;
  margin: 0 2px;
  background: #bbb;
}

.local .periods {
  height: 15px;
}

/* Side panels */
.workspace {
  display: flex;
  flex: 1;
  min-height: 0;
}

.side {
  display: flex;
  flex-direction: column;
  width: 176px;
  padding: 1px 0 3px 1px;
  gap: 3px;
}

.guest .side {
  width: 101px;
}

.panel {
  display: flex;
  flex-direction: column;
  min-height: 0;
  border: 1px solid #ccc;
  border-top: none;
}

.market {
  height: 156px;
}

.guest .market {
  height: 130px;
}

.navigator {
  flex: 1;
}

.panel h2 {
  display: flex;
  justify-content: space-between;
  padding: 0 2px;
  background: linear-gradient(90deg, #c4d3e4, #dfe6ee);
}

.panel h2 button {
  font-weight: bold;
  font-size: 8px;
}

.panel-body {
  display: flex;
  flex: 1;
  min-height: 0;
  overflow: hidden;
  background: #fff;
}

.quotes {
  flex: 1;
  height: 143px;
  border-collapse: collapse;
  table-layout: fixed;
}

.guest .quotes {
  height: 109px;
}

.quotes th {
  height: 13px;
  padding: 0 3px;
  font-weight: normal;
  text-align: right;
}

.guest .quotes th {
  height: 12px;
}

.quotes th:first-child {
  width: 41%;
  text-align: left;
}

.quotes th:nth-child(2) {
  width: 28%;
}

.quotes td {
  padding: 0 2px;
  background: #f0fff0;
  border-top: 1px solid #cfe3c4;
  border-right: 1px solid #dbe8d4;
  color: #1c26c4;
  text-align: right;
  white-space: nowrap;
}

.quotes td:first-child {
  color: #9aa29a;
  text-align: left;
}

.quotes td svg {
  display: inline-block;
  width: 6px;
  height: 6px;
  margin: 0 3px 0 1px;
  vertical-align: middle;
}

.quotes .active td:first-child {
  color: #222;
}

.quotes .falling td + td {
  color: #d0342c;
}

.thin-scroll {
  width: 1px;
  height: 9px;
  margin: 10px 6px 0 4px;
  background: #888;
}

.thin-scroll.low {
  margin-top: 60px;
}

.scrollbar {
  display: flex;
  flex-direction: column;
  justify-content: space-between;
  width: 9px;
  background: #f0f0f0;
  text-align: center;
}

.thumb {
  display: flex;
  align-items: center;
  justify-content: center;
  height: 36px;
  margin: 0 0 auto;
  background: #cdcdcd;
}

.thumb.tall {
  height: 66px;
}

.tabs {
  display: flex;
  flex: none;
  align-items: center;
  height: 11px;
  border-top: 1px solid #444;
  color: #7d7d7d;
}

.tabs button {
  padding: 0 5px;
  border-right: 1px solid #aaa;
}

.tabs .selected {
  height: 11px;
  margin-top: -1px;
  padding: 0 6px;
  background: #fff;
  border: 1px solid #444;
  border-top: none;
  color: #111;
}

.tabs sub {
  padding-left: 1px;
  color: #e0303c;
  font-size: 5px;
  font-weight: bold;
  line-height: 4px;
  vertical-align: -2px;
}

/* Navigator tree */
.tree {
  display: grid;
  flex: 1;
  grid-auto-rows: 1fr;
  height: 107px;
  min-width: 0;
  overflow: hidden;
  list-style: none;
}

.guest .tree {
  height: 88px;
}

.tree li {
  display: flex;
  align-items: center;
  padding-left: 3px;
  gap: 3px;
  white-space: nowrap;
  background: linear-gradient(#ccc, #ccc) 7px 0 / 1px 100% no-repeat;
}

.tree svg {
  width: 9px;
  height: 9px;
}

.tree i {
  width: 5px;
  border-top: 1px dotted #aaa;
}

.tree .box {
  height: 5px;
  border: 1px solid #aaa;
  background: linear-gradient(#555, #555) center / 3px 1px no-repeat #fff;
}

.tree .plus {
  background:
    linear-gradient(#555, #555) center / 3px 1px no-repeat,
    linear-gradient(#555, #555) center / 1px 3px no-repeat,
    #fff;
}

.tree .l1 {
  padding-left: 5px;
}

.tree .l2 {
  padding-left: 17px;
  background-position: 18px 0;
}

.tree .l3 {
  padding-left: 28px;
  background-position: 29px 0;
}

/* Charts */
.chart-area {
  display: flex;
  flex: 1;
  flex-direction: column;
  min-width: 0;
  padding-left: 2px;
}

.chart {
  display: grid;
  flex: 1;
  grid-template-columns: 1fr 25px;
  grid-template-rows: 1fr 11px;
  min-height: 0;
  margin-top: 1px;
  padding: 1px 0 0 1px;
  background: #000;
  color: #eee;
  font-size: 5px;
  line-height: 6px;
}

.guest .chart {
  margin-bottom: 1px;
}

.plot {
  position: relative;
  min-height: 0;
  border: solid #aaa;
  border-width: 1px 1px 1px 0;
}

.plot > svg {
  position: absolute;
  width: 100%;
  height: 100%;
}

.chart-head {
  position: relative;
  display: flex;
  gap: 3px;
  padding: 1px 3px;
}

.chart-head .ea {
  margin-left: auto;
}

.prices {
  position: relative;
  display: flex;
  flex-direction: column;
  grid-row: 1 / 3;
  grid-column: 2;
  justify-content: space-between;
  padding: 3px 0 10px 3px;
}

.guest .prices {
  padding: 9px 0 10px 3px;
}

.prices .current {
  margin-right: 2px;
  margin-left: -2px;
  padding-left: 2px;
  background: #fff;
  color: #111;
}

.prices .float {
  position: absolute;
  top: 50px;
  left: 3px;
}

.times {
  display: grid;
  grid-template-columns: repeat(8, 1fr);
  margin-right: -4px;
  padding-top: 2px;
  white-space: nowrap;
}

.guest .times {
  grid-template-columns: repeat(19, 1fr);
  margin-right: -2px;
}

.guest .times span {
  grid-column: span 2;
}

.chart-tabs {
  height: 13px;
}

.pager {
  margin-left: auto;
  padding-right: 3px;
}

.popup {
  position: absolute;
  background: #fff;
  color: #222;
  border: 1px solid #ddd;
  font-family: "Liberation Sans", Arial, sans-serif;
}

.status-popup {
  top: 21px;
  left: 6px;
  width: 105px;
  height: 103px;
  border: none;
  font-size: 7px;
  line-height: 11px;
}

.lamp {
  width: 15px;
  height: 15px;
  background: #0f0;
}

.status-popup dl {
  display: grid;
  grid-template-columns: auto auto;
  justify-content: space-between;
  padding: 0 14px 0 2px;
}

.status-popup dd {
  color: #e0244c;
  text-align: right;
}

.status-popup .dark {
  color: #333;
}

.server-popup {
  top: 76px;
  left: 6px;
  display: flex;
  flex-direction: column;
  width: 105px;
  height: 102px;
  padding: 21px 13px 4px 1px;
  font-size: 9px;
  line-height: 8px;
}

.server-popup button {
  height: 16px;
  border: 1px solid;
  border-color: #ddd #777 #777 #ddd;
  font-size: 7px;
}

.server-popup button:nth-of-type(1) {
  margin: 5px 0 22px;
}

.pointer {
  position: absolute;
  top: 17px;
  left: 41px;
  width: 8px;
  height: 12px;
}

.one-click {
  position: relative;
  display: grid;
  grid-template-columns: 26px 26px 26px 26px;
  grid-template-rows: 10px 20px;
  width: 104px;
  margin: 2px 0 0 1px;
  color: #fff;
}

.one-click .side-name {
  background: #dd3338;
  color: #fbd3d3;
}

.volume {
  display: flex;
  grid-column: span 2;
  background: #e8e8e8;
  border: 1px solid #333;
  border-width: 0 1px 1px;
  color: #333;
}

.volume button {
  width: 10px;
}

.volume input {
  flex: 1;
  min-width: 0;
  padding-right: 3px;
  border: none;
  font: inherit;
  font-size: 6px;
  text-align: right;
}

.quote {
  display: flex;
  grid-column: span 2;
  align-items: flex-end;
  justify-content: center;
  gap: 2px;
  padding-bottom: 2px;
  background: linear-gradient(#d8282e, #a90f18);
}

.quote + .quote {
  border-left: 1px solid #300;
}

.quote small {
  font-size: 7px;
  font-weight: bold;
  line-height: 8px;
}

.quote b {
  font-size: 16px;
  font-weight: normal;
  line-height: 16px;
}

.quote sup {
  align-self: flex-start;
  font-size: 7px;
  line-height: 8px;
}

/* Terminal */
.terminal {
  display: flex;
  height: 135px;
  border-top: 1px solid #ccc;
}

.guest .terminal {
  height: 143px;
}

.spine {
  display: flex;
  flex-direction: column;
  justify-content: space-between;
  align-items: center;
  width: 8px;
  background: linear-gradient(#e4e9ef, #c3d3e6);
}

.spine button {
  font-weight: bold;
}

.spine h2 {
  writing-mode: vertical-rl;
  transform: rotate(180deg);
}

.terminal-main {
  display: flex;
  flex: 1;
  flex-direction: column;
  justify-content: space-between;
  min-width: 0;
  overflow: hidden;
  background: #fff;
}

.terminal-main .tabs {
  height: 14px;
  align-items: flex-start;
  padding-top: 1px;
  background: #f3f3f3;
}

.trades {
  width: 100%;
  border-collapse: collapse;
  table-layout: fixed;
  white-space: nowrap;
}

.trades th {
  height: 13px;
  padding: 0 2px;
  border-right: 1px solid #e6e6e6;
  font-weight: normal;
  text-align: right;
}

.guest .trades th {
  height: 11px;
}

.trades td {
  height: 11px;
  padding: 0 2px;
  background: #c9c9c9;
  font-weight: bold;
  text-align: right;
}

.trades th:first-child,
.trades td:first-child {
  text-align: left;
}

.trades th:nth-child(1) { width: 37px; }
.trades th:nth-child(2) { width: 52px; }
.trades th:nth-child(3) { width: 28px; }
.trades th:nth-child(4) { width: 18px; }
.trades th:nth-child(5) { width: 26px; }
.trades th:nth-child(6),
.trades th:nth-child(7),
.trades th:nth-child(8),
.trades th:nth-child(9),
.trades th:nth-child(10),
.trades th:nth-child(11) { width: 29px; }
.trades th:nth-child(12) { width: 43px; }
.trades th:nth-child(13) { width: auto; }

.guest .trades th:nth-child(1) { width: 44px; }
.guest .trades th:nth-child(2) { width: 61px; }
.guest .trades th:nth-child(3) { width: 30px; }
.guest .trades th:nth-child(4) { width: 24px; }
.guest .trades th:nth-child(5) { width: 29px; }
.guest .trades th:nth-child(n + 6) { width: 34px; }
.guest .trades th:nth-child(12) { width: auto; }

.dot {
  display: inline-block;
  width: 4px;
  height: 4px;
  margin: 0 5px 1px 2px;
  border: 1px solid #999;
  border-radius: 2px;
  vertical-align: middle;
}

/* Status bar */
.statusbar {
  display: flex;
  align-items: center;
  height: 14px;
  padding-left: 1px;
  border-top: 1px solid #ccc;
  white-space: nowrap;
}

.statusbar span {
  width: 38px;
  height: 10px;
  padding-left: 3px;
  border-left: 1px solid #ccc;
  line-height: 10px;
}

.statusbar .help {
  flex: 1;
  padding-left: 0;
  border: none;
}

.statusbar .profile {
  width: 62px;
}

.statusbar .wide-cell,
.statusbar .stamp {
  width: 56px;
}

.statusbar .traffic {
  display: flex;
  align-items: center;
  gap: 2px;
  width: 34px;
}

.guest .statusbar .traffic {
  width: 11px;
}

.traffic svg {
  width: 13px;
  height: 7px;
}

.guest .traffic svg {
  width: 6px;
}

.grip {
  align-self: flex-end;
  width: 6px;
  height: 6px;
}
```
